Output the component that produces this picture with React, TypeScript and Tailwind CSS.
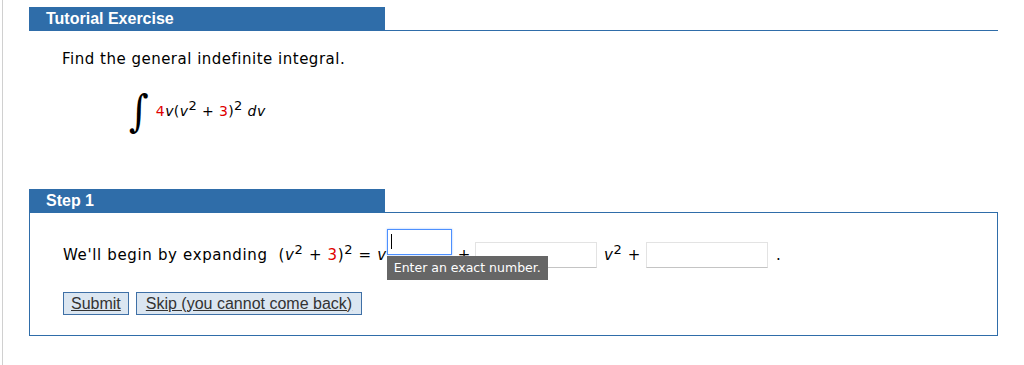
import React from 'react';

const blue = 'border-[#2f6da9]';

function SectionHeader({ title }: { title: string }) {
  return (
    <div className="flex items-end">
      <div className="w-[356px] h-[24px] bg-[#2f6da9] text-white font-bold text-[16px] leading-[24px] pl-[17px] font-['Liberation_Sans',Arial,sans-serif]">
        {title}
      </div>
      <div className={`flex-1 border-b ${blue}`} />
    </div>
  );
}

function Sq() {
  return <sup className="text-[13px] -top-[0.45em]">2</sup>;
}

function Blank() {
  return (
    <div className="w-[122px] mt-[13px] h-[26px] border border-[#e3e3e3] border-b-[#c4c4c4] bg-white shrink-0" />
  );
}

export default function App() {
  return (
    <div className="h-[365px] bg-white font-['DejaVu_Sans',Verdana,sans-serif] text-black">
      <div className="ml-[2px] h-full border-l border-[#d0d0d0] pl-[26px] pr-[26px] pt-[7px]">
        <SectionHeader title="Tutorial Exercise" />

        <div className="pl-[33px] mt-[19px] text-[15px] leading-[18px] tracking-[0.5px]">
          Find the general indefinite integral.
        </div>

        <div className="flex items-center pl-[100px] mt-[23px] h-[40px]">
          <span className="font-['DejaVu_Serif',serif] text-[38px] leading-none font-light scale-y-[1.15]">∫</span>
          <span className="ml-[7px] text-[14px] leading-[18px] tracking-[0.4px]">
            <span className="text-[#e00000]">4</span>
            <i>v</i>(<i>v</i>
            <Sq /> + <span className="text-[#e00000]">3</span>)<Sq /> <i>dv</i>
          </span>
        </div>

        <div className="mt-[58px]">
          <SectionHeader title="Step 1" />
          <div className={`border-x border-b ${blue} pt-[16px] pb-[20px] pl-[33px]`}>
            <div className="flex items-start text-[15px] leading-[18px] tracking-[0.65px]">
              <span className="mt-[17px] whitespace-pre">
                We'll begin by expanding  (<i>v</i>
                <Sq /> + <span className="text-[#e00000]">3</span>)<Sq /> = <i>v</i>
              </span>
              <div className="relative shrink-0">
                <div className="w-[65px] h-[26px] border border-[#4d90fe] bg-white shadow-[0_0_2px_#9ec3ff] pl-[3px] pt-[4px]">
                  <div className="w-px h-[15px] bg-black" />
                </div>
                <div className="absolute left-0 top-[27px] z-10 h-[24px] px-[7px] bg-[#666666] text-white text-[12.5px] leading-[24px] tracking-normal whitespace-nowrap">
                  Enter an exact number.
                </div>
              </div>
              <span className="mt-[17px] ml-[6px] mr-[4px]">+</span>
              <Blank />
              <span className="mt-[17px] ml-[7px] mr-[5px] whitespace-pre">
                <i>v</i>
                <Sq /> +
              </span>
              <Blank />
              <span className="mt-[17px] ml-[8px]">.</span>
            </div>

            <div className="flex gap-[7px] mt-[24px] font-['Liberation_Sans',Arial,sans-serif] text-[16px] text-[#333]">
              <button className="h-[23px] px-[7px] bg-[#dbe6f1] border-[1.5px] border-[#3f70a6] underline leading-[20px]">
                Submit
              </button>
              <button className="h-[23px] px-[9px] bg-[#dbe6f1] border-[1.5px] border-[#3f70a6] underline leading-[20px]">
                Skip (you cannot come back)
              </button>
            </div>
          </div>
        </div>
      </div>
    </div>
  );
}
